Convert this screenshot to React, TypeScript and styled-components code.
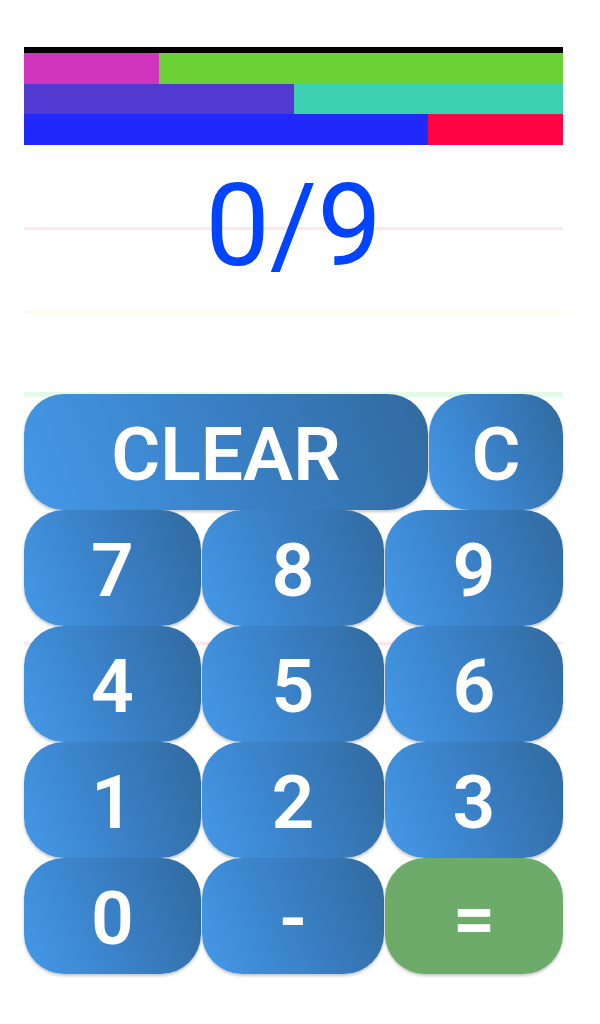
import styled, { createGlobalStyle } from 'styled-components'

const GlobalStyle = createGlobalStyle`
  html, body {
    margin: 0;
    padding: 0;
    background: #ffffff;
  }

  body {
    font-family: Roboto, "Liberation Sans", Arial, sans-serif;
  }
`

const PageStyled = styled.div`
  width: 539px;
  margin-left: 24px;
  padding-top: 47px;
  padding-bottom: 51px;

  background-image:
    repeating-linear-gradient(to bottom, transparent 0 227px, #ffe6ea 227px 230px, transparent 230px 415px),
    repeating-linear-gradient(to bottom, transparent 0 311px, #fffce2 311px 313px, transparent 313px 415px),
    repeating-linear-gradient(to bottom, transparent 0 392px, #e3f9e9 392px 397px, transparent 397px 415px);
`

const ProgressStyled = styled.div`
  display: flex;
  flex-direction: column;
  border-top: 6px solid #000000;
`

const BarRowStyled = styled.div`
  display: flex;
  height: 30.67px;
`

const SegmentStyled = styled.div<{ $grow: number; $color: string }>`
  flex: ${(props) => props.$grow};
  background-color: ${(props) => props.$color};
`

const DisplayStyled = styled.div`
  display: flex;
  justify-content: center;
  align-items: flex-start;
  height: 249px;
  padding-top: 23px;
  box-sizing: border-box;
`

const ScoreStyled = styled.span`
  font-family: Roboto, "Liberation Sans", Arial, sans-serif;
  font-size: 115px;
  font-weight: 400;
  line-height: 115px;
  color: #0044ff;
`

const KeypadStyled = styled.div`
  display: flex;
  flex-direction: column;
`

const KeyRowStyled = styled.div<{ $columns: string }>`
  display: grid;
  grid-template-columns: ${(props) => props.$columns};
  column-gap: 1px;
  height: 116px;
`

const KeyStyled = styled.button<{ $variant?: 'blue' | 'green' }>`
  display: flex;
  align-items: center;
  justify-content: center;
  height: 116px;
  padding: 5px 0 0;
  margin: 0;
  border: none;
  border-radius: 40px;

  background: ${(props) =>
    props.$variant === 'green' ? '#6cab6a' : 'linear-gradient(68deg, #4499e8 0%, #3a80c6 50%, #316a9e 100%)'};
  box-shadow: 0 2px 3px rgba(0, 0, 0, 0.22);

  font-family: Roboto, "Liberation Sans", Arial, sans-serif;
  font-size: 75px;
  font-weight: 600;
  line-height: 1;
  color: #ffffff;
  cursor: pointer;
`

const bars = [
  { done: 1, rest: 3, colors: ['#d035bd', '#6bd236'] },
  { done: 2, rest: 2, colors: ['#5239cf', '#3ccfb0'] },
  { done: 3, rest: 1, colors: ['#2029f9', '#ff0342'] },
]

const digitRows = [
  ['7', '8', '9'],
  ['4', '5', '6'],
  ['1', '2', '3'],
]

const App = () => {
  return (
    <PageStyled>
      <GlobalStyle />

      <ProgressStyled>
        {bars.map((bar, index) => (
          <BarRowStyled key={index}>
            <SegmentStyled $grow={bar.done} $color={bar.colors[0]} />
            <SegmentStyled $grow={bar.rest} $color={bar.colors[1]} />
          </BarRowStyled>
        ))}
      </ProgressStyled>

      <DisplayStyled>
        <ScoreStyled>0/9</ScoreStyled>
      </DisplayStyled>

      <KeypadStyled>
        <KeyRowStyled $columns="404px 1fr">
          <KeyStyled>CLEAR</KeyStyled>
          <KeyStyled>C</KeyStyled>
        </KeyRowStyled>

        {digitRows.map((row) => (
          <KeyRowStyled key={row[0]} $columns="177px 182px 1fr">
            {row.map((digit) => (
              <KeyStyled key={digit}>{digit}</KeyStyled>
            ))}
          </KeyRowStyled>
        ))}

        <KeyRowStyled $columns="177px 182px 1fr">
          <KeyStyled>0</KeyStyled>
          <KeyStyled>-</KeyStyled>
          <KeyStyled $variant="green">=</KeyStyled>
        </KeyRowStyled>
      </KeypadStyled>
    </PageStyled>
  )
}

export default App
